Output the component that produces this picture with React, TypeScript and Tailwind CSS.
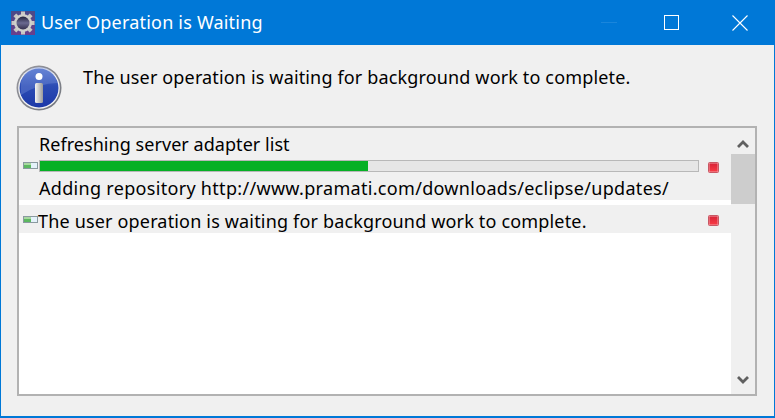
function Stop() {
  return (
    <svg width="11" height="11" viewBox="0 0 11 11" className="block shrink-0">
      <defs>
        <linearGradient id="st" x1="0" y1="0" x2="0" y2="1">
          <stop offset="0" stopColor="#d82438" />
          <stop offset="1" stopColor="#f83a44" />
        </linearGradient>
      </defs>
      <rect x="0.5" y="0.5" width="10" height="10" rx="1" fill="#f09ca4" stroke="#c85864" />
      <rect x="1.5" y="1.5" width="8" height="8" fill="url(#st)" />
    </svg>
  );
}

function ProgIcon() {
  return (
    <svg width="15" height="7" viewBox="0 0 15 7" className="block shrink-0">
      <rect x="0" y="0" width="15" height="7" fill="#8a9aa0" />
      <rect x="1" y="1" width="7" height="5" fill="#a8d8a0" />
      <rect x="1" y="3" width="7" height="3" fill="#5cb860" />
      <rect x="8" y="1" width="6" height="5" fill="#e4f2fa" />
    </svg>
  );
}

function GearIcon() {
  const teeth = [0, 45, 90, 135, 180, 225, 270, 315];
  return (
    <svg width="24" height="24" viewBox="0 0 24 24" className="block shrink-0">
      <defs>
        <linearGradient id="gb" x1="0" y1="0" x2="0" y2="1">
          <stop offset="0" stopColor="#4a4a88" />
          <stop offset="1" stopColor="#6a3f8c" />
        </linearGradient>
        <linearGradient id="gi" x1="0" y1="0" x2="0" y2="1">
          <stop offset="0" stopColor="#22223c" />
          <stop offset="0.5" stopColor="#6a6a90" />
          <stop offset="1" stopColor="#34304c" />
        </linearGradient>
      </defs>
      <rect x="0" y="0" width="24" height="24" fill="url(#gb)" />
      {teeth.map((a) => (
        <rect key={a} x="10" y="0.5" width="4" height="6" fill="#c8c8c4" transform={`rotate(${a} 12 12)`} />
      ))}
      <circle cx="12" cy="12" r="9" fill="#d0d0cc" />
      <circle cx="12" cy="12" r="6.5" fill="url(#gi)" />
    </svg>
  );
}

function InfoIcon() {
  return (
    <svg width="46" height="46" viewBox="0 0 46 46" className="block shrink-0">
      <defs>
        <linearGradient id="ib" x1="0" y1="0" x2="0" y2="1">
          <stop offset="0" stopColor="#5a7ad0" />
          <stop offset="0.45" stopColor="#2c4cb4" />
          <stop offset="1" stopColor="#1c38a8" />
        </linearGradient>
        <linearGradient id="ir" x1="0" y1="0" x2="1" y2="1">
          <stop offset="0" stopColor="#9a9aa0" />
          <stop offset="1" stopColor="#70747c" />
        </linearGradient>
        <linearGradient id="ii" x1="0" y1="0" x2="1" y2="0">
          <stop offset="0" stopColor="#f4f4f4" />
          <stop offset="1" stopColor="#9a9a9a" />
        </linearGradient>
      </defs>
      <circle cx="23" cy="23" r="22.5" fill="url(#ir)" />
      <circle cx="23" cy="23" r="20.8" fill="#f4f4f4" />
      <circle cx="23" cy="23" r="19.5" fill="url(#ib)" />
      <path d="M5 22 A18 18 0 0 1 41 18 Q24 18 5 30 Z" fill="#7a94dc" opacity="0.35" />
      <circle cx="23" cy="11.5" r="3.5" fill="#ffffff" />
      <rect x="19" y="18" width="8" height="20" rx="1.5" fill="url(#ii)" />
    </svg>
  );
}

export default function App() {
  return (
    <div className="h-[418px] w-[775px] overflow-hidden border border-t-0 border-b-2 border-[#0078d7] bg-[#f0f0f0] font-['Noto_Sans',sans-serif] text-[#000]">
      <div className="-mx-px flex h-[45px] items-center bg-[#0078d7] pl-[11px] text-white">
        <GearIcon />
        <span className="ml-[6px] text-[18px] tracking-[0.2px]">User Operation is Waiting</span>
        <svg width="16" height="2" viewBox="0 0 16 2" className="ml-auto mr-[47px] block">
          <rect width="16" height="1" fill="#1a86dc" />
        </svg>
        <svg width="15" height="15" viewBox="0 0 15 15" className="mr-[53px] block">
          <rect x="0.5" y="0.5" width="14" height="14" fill="none" stroke="#fff" />
        </svg>
        <svg width="16" height="16" viewBox="0 0 16 16" className="mr-[27px] block">
          <path d="M0.5 0.5 L15.5 15.5 M15.5 0.5 L0.5 15.5" stroke="#fff" strokeWidth="1.1" />
        </svg>
      </div>
      <div className="flex h-[81px] pl-[15px] pt-[20px]">
        <InfoIcon />
        <span className="ml-[21px] mt-0 text-[18px] leading-[24px] tracking-[0.15px]">
          The user operation is waiting for background work to complete.
        </span>
      </div>
      <div className="ml-4 flex h-[270px] w-[740px] border-2 border-[#b2b2b2]">
        <div className="flex min-w-0 flex-1 flex-col bg-white">
          <div className="flex h-[72px] flex-col bg-[#f0f0f0]">
            <div className="h-[31px] pl-[20px] pt-[4px] text-[18px] leading-[24px] tracking-[0.05px]">Refreshing server adapter list</div>
            <div className="flex h-[13px] items-center pl-[4px]">
              <ProgIcon />
              <div className="ml-[1px] h-[12px] w-[660px] border border-[#b8b8b8] bg-[#e6e6e6]">
                <div className="h-full bg-[#06b025]" style={{ width: "49.8%" }} />
              </div>
              <div className="ml-[9px] mt-[3px]"><Stop /></div>
            </div>
            <div className="pl-[20px] pt-[4px] text-[18px] leading-[24px] tracking-[0.31px]">
              Adding repository http://www.pramati.com/downloads/eclipse/updates/
            </div>
          </div>
          <div className="mt-[5px] flex h-[28px] items-center bg-[#f0f0f0] pl-[4px]">
            <ProgIcon />
            <span className="flex-1 pt-[3px] text-[18px] leading-[24px] tracking-[0.17px]">
              The user operation is waiting for background work to complete.
            </span>
            <div className="mr-[12px] mt-[3px]"><Stop /></div>
          </div>
        </div>
        <div className="flex h-full w-6 flex-col justify-between bg-[#f0f0f0]">
          <div>
            <div className="flex h-[26px] items-center justify-center pt-[4px]">
              <svg width="12" height="9" viewBox="0 0 12 9" className="block">
                <path d="M1 8 L6 3 L11 8" fill="none" stroke="#606060" strokeWidth="2.8" />
              </svg>
            </div>
            <div className="h-[50px] bg-[#cdcdcd]" />
          </div>
          <div className="flex h-[25px] items-center justify-center pb-[2px]">
            <svg width="12" height="9" viewBox="0 0 12 9" className="block">
              <path d="M1 1 L6 6 L11 1" fill="none" stroke="#606060" strokeWidth="2.8" />
            </svg>
          </div>
        </div>
      </div>
    </div>
  );
}
